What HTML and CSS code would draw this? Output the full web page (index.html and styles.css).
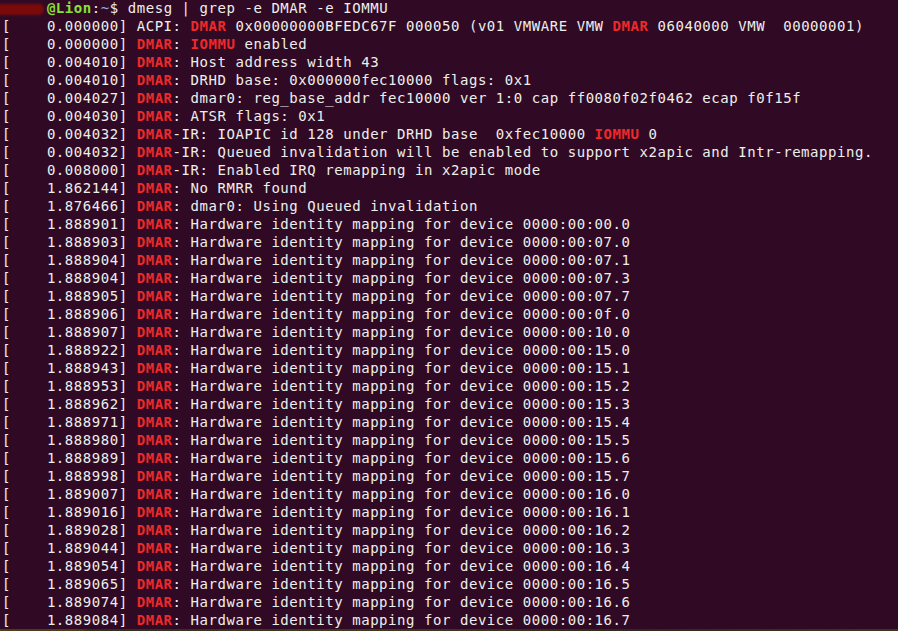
FILE: index.html
```html
<!DOCTYPE html>
<html>
<head>
<meta charset="utf-8">
<link rel="stylesheet" href="styles.css">
</head>
<body>
<div class="term">
<div class="scribble"></div>
<pre class="out"><span class="g">     @Lion</span>:<span class="b">~</span>$ dmesg | grep -e DMAR -e IOMMU
[    0.000000] ACPI: <span class="r">DMAR</span> 0x00000000BFEDC67F 000050 (v01 VMWARE VMW <span class="r">DMAR</span> 06040000 VMW  00000001)
[    0.000000] <span class="r">DMAR</span>: <span class="r">IOMMU</span> enabled
[    0.004010] <span class="r">DMAR</span>: Host address width 43
[    0.004010] <span class="r">DMAR</span>: DRHD base: 0x000000fec10000 flags: 0x1
[    0.004027] <span class="r">DMAR</span>: dmar0: reg_base_addr fec10000 ver 1:0 cap ff0080f02f0462 ecap f0f15f
[    0.004030] <span class="r">DMAR</span>: ATSR flags: 0x1
[    0.004032] <span class="r">DMAR</span>-IR: IOAPIC id 128 under DRHD base  0xfec10000 <span class="r">IOMMU</span> 0
[    0.004032] <span class="r">DMAR</span>-IR: Queued invalidation will be enabled to support x2apic and Intr-remapping.
[    0.008000] <span class="r">DMAR</span>-IR: Enabled IRQ remapping in x2apic mode
[    1.862144] <span class="r">DMAR</span>: No RMRR found
[    1.876466] <span class="r">DMAR</span>: dmar0: Using Queued invalidation
[    1.888901] <span class="r">DMAR</span>: Hardware identity mapping for device 0000:00:00.0
[    1.888903] <span class="r">DMAR</span>: Hardware identity mapping for device 0000:00:07.0
[    1.888904] <span class="r">DMAR</span>: Hardware identity mapping for device 0000:00:07.1
[    1.888904] <span class="r">DMAR</span>: Hardware identity mapping for device 0000:00:07.3
[    1.888905] <span class="r">DMAR</span>: Hardware identity mapping for device 0000:00:07.7
[    1.888906] <span class="r">DMAR</span>: Hardware identity mapping for device 0000:00:0f.0
[    1.888907] <span class="r">DMAR</span>: Hardware identity mapping for device 0000:00:10.0
[    1.888922] <span class="r">DMAR</span>: Hardware identity mapping for device 0000:00:15.0
[    1.888943] <span class="r">DMAR</span>: Hardware identity mapping for device 0000:00:15.1
[    1.888953] <span class="r">DMAR</span>: Hardware identity mapping for device 0000:00:15.2
[    1.888962] <span class="r">DMAR</span>: Hardware identity mapping for device 0000:00:15.3
[    1.888971] <span class="r">DMAR</span>: Hardware identity mapping for device 0000:00:15.4
[    1.888980] <span class="r">DMAR</span>: Hardware identity mapping for device 0000:00:15.5
[    1.888989] <span class="r">DMAR</span>: Hardware identity mapping for device 0000:00:15.6
[    1.888998] <span class="r">DMAR</span>: Hardware identity mapping for device 0000:00:15.7
[    1.889007] <span class="r">DMAR</span>: Hardware identity mapping for device 0000:00:16.0
[    1.889016] <span class="r">DMAR</span>: Hardware identity mapping for device 0000:00:16.1
[    1.889028] <span class="r">DMAR</span>: Hardware identity mapping for device 0000:00:16.2
[    1.889044] <span class="r">DMAR</span>: Hardware identity mapping for device 0000:00:16.3
[    1.889054] <span class="r">DMAR</span>: Hardware identity mapping for device 0000:00:16.4
[    1.889065] <span class="r">DMAR</span>: Hardware identity mapping for device 0000:00:16.5
[    1.889074] <span class="r">DMAR</span>: Hardware identity mapping for device 0000:00:16.6
[    1.889084] <span class="r">DMAR</span>: Hardware identity mapping for device 0000:00:16.7</pre>
</div>
<div class="wallpaper"></div>
</body>
</html>
```
FILE: styles.css
```css
html, body {
  margin: 0;
  padding: 0;
  background: #300a24;
  overflow: hidden;
}
.term {
  position: relative;
  height: 629px;
  background: #300a24;
  overflow: hidden;
}
.out {
  margin: -1px 0 0 0;
  padding: 0 0 0 2px;
  font-family: "DejaVu Sans Mono", monospace;
  font-size: 14px;
  letter-spacing: 0.55px;
  line-height: 18px;
  color: #eeeeec;
  white-space: pre;
}
.r {
  color: #ef2929;
  font-weight: bold;
}
.g {
  color: #8ae234;
  font-weight: bold;
}
.b {
  color: #8fa9d6;
}
.scribble {
  position: absolute;
  left: -4px;
  top: 4px;
  width: 48px;
  height: 11px;
  background: #7a0a0a;
  border-radius: 5px;
  filter: blur(1px);
  z-index: 2;
}
.wallpaper {
  height: 2px;
  background: linear-gradient(90deg, #4a3d1c 0%, #4a3d1c 9%, #2e2f1d 10%, #3f3a22 40%, #2c2a1a 70%, #3d3522 100%);
}
```
